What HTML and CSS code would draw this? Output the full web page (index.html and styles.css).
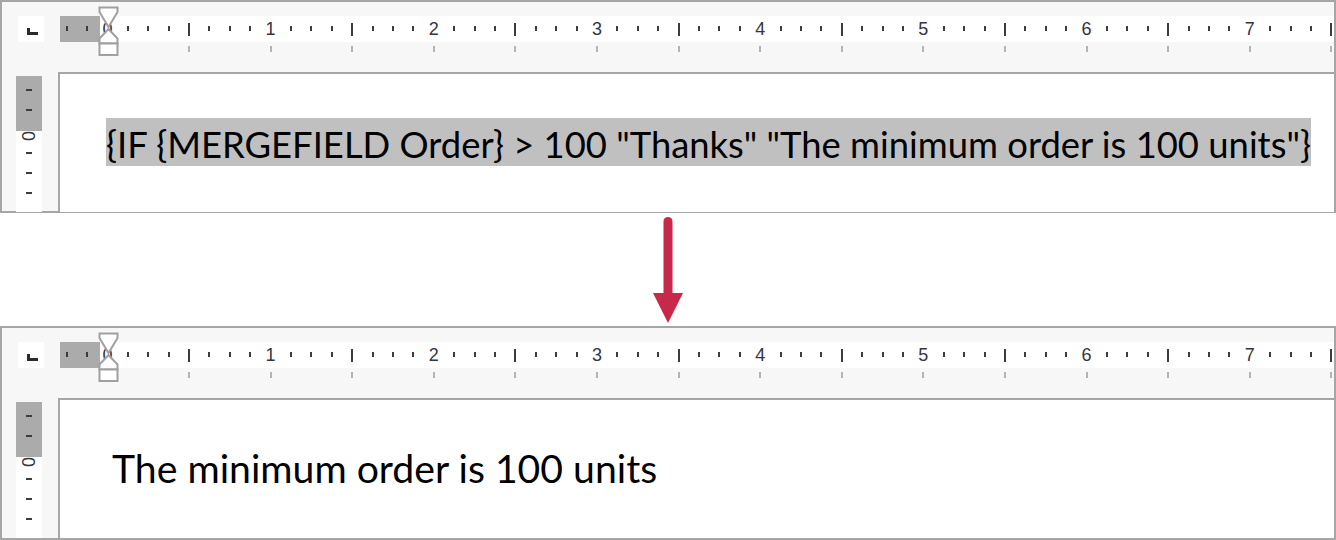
FILE: index.html
```html
<!DOCTYPE html>
<html lang="en">
<head>
    <meta charset="UTF-8">
    <title>IF field result</title>
    <link rel="stylesheet" href="styles.css">
</head>
<body>

<div class="panel">
    <div class="panel-top">
        <div class="tab-corner"><span class="tab-l"></span></div>
        <div class="ruler-col">
            <div class="hruler">
                <div class="ruler-nums">
                    <span><b>0</b></span><span><b>1</b></span><span><b>2</b></span><span><b>3</b></span>
                    <span><b>4</b></span><span><b>5</b></span><span><b>6</b></span><span><b>7</b></span>
                </div>
            </div>
            <div class="tabstops"></div>
            <svg class="indent-marker" width="21" height="50" viewBox="0 0 21 50">
                <path d="M1.5 1.5 H19.5 V6 L10.5 21 L1.5 6 Z"/>
                <path d="M10.5 23 L19.5 32.5 V37.5 H1.5 V32.5 Z"/>
                <rect x="1.5" y="37.5" width="18" height="11.5"/>
            </svg>
        </div>
    </div>
    <div class="panel-body">
        <div class="vruler">
            <i class="vtick"></i>
            <i class="vtick second"></i>
            <span class="vnum">0</span>
            <i class="vtick after-num"></i>
            <i class="vtick"></i>
            <i class="vtick"></i>
        </div>
        <div class="page page-code">
            <span class="field-code">{IF {MERGEFIELD Order} &gt; 100 "Thanks" "The minimum order is 100 units"}</span>
        </div>
    </div>
</div>

<div class="arrow-row">
    <svg width="32" height="113" viewBox="0 0 32 113">
        <line x1="16" y1="8.5" x2="16" y2="84" stroke="#c8294b" stroke-width="9" stroke-linecap="round"/>
        <polygon points="1,80 31,80 16,110" fill="#c8294b"/>
    </svg>
</div>

<div class="panel panel-bottom">
    <div class="panel-top">
        <div class="tab-corner"><span class="tab-l"></span></div>
        <div class="ruler-col">
            <div class="hruler">
                <div class="ruler-nums">
                    <span><b>0</b></span><span><b>1</b></span><span><b>2</b></span><span><b>3</b></span>
                    <span><b>4</b></span><span><b>5</b></span><span><b>6</b></span><span><b>7</b></span>
                </div>
            </div>
            <div class="tabstops"></div>
            <svg class="indent-marker" width="21" height="50" viewBox="0 0 21 50">
                <path d="M1.5 1.5 H19.5 V6 L10.5 21 L1.5 6 Z"/>
                <path d="M10.5 23 L19.5 32.5 V37.5 H1.5 V32.5 Z"/>
                <rect x="1.5" y="37.5" width="18" height="11.5"/>
            </svg>
        </div>
    </div>
    <div class="panel-body">
        <div class="vruler">
            <i class="vtick"></i>
            <i class="vtick second"></i>
            <span class="vnum">0</span>
            <i class="vtick after-num"></i>
            <i class="vtick"></i>
            <i class="vtick"></i>
        </div>
        <div class="page page-result">
            <span class="field-result">The minimum order is 100 units</span>
        </div>
    </div>
</div>

</body>
</html>
```

FILE: styles.css
```css
body {
    margin: 0;
    padding: 0;
    background: #fff;
    font-family: "Liberation Sans", Arial, sans-serif;
}

.panel {
    height: 213px;
    box-sizing: border-box;
    border: 2px solid #a6a6a6;
    background-color: #f7f7f7;
    display: flex;
    flex-direction: column;
}

.panel-bottom {
    height: 214px;
}

.panel-top {
    display: flex;
    padding: 14px 0 0 16px;
}

.tab-corner {
    width: 26px;
    height: 26px;
    background: #fff;
    margin-right: 16px;
    box-sizing: border-box;
    padding: 12px 0 0 9px;
}

.tab-l {
    display: block;
    width: 8px;
    height: 4px;
    border-left: 3px solid #2b2b2b;
    border-bottom: 3px solid #2b2b2b;
}

.ruler-col {
    flex: 1;
    position: relative;
}

/* ticks: half inch, eighth inch, then the grey left margin */
.hruler {
    height: 26px;
    overflow: hidden;
    background:
        repeating-linear-gradient(to right, transparent 0 128px, #3c3c3c 128px 130px, transparent 130px 163.2px) 0 7px / 100% 13px no-repeat,
        repeating-linear-gradient(to right, transparent 0 5.6px, #3c3c3c 5.6px 7.6px, transparent 7.6px 20.4px) 0 10px / 100% 5px no-repeat,
        linear-gradient(to right, #ababab 0 40px, #fff 40px);
}

.ruler-nums {
    display: flex;
    margin-left: -34.2px;
}

.ruler-nums span {
    flex: 0 0 163.2px;
    text-align: center;
    line-height: 26px;
    font-size: 18px;
    color: #35353f;
}

.ruler-nums b {
    font-weight: normal;
    background: #fff;
    padding: 0 2px;
}

.tabstops {
    height: 6px;
    margin-top: 4px;
    background: repeating-linear-gradient(to right, transparent 0 46.4px, #b4b4b4 46.4px 48.4px, transparent 48.4px 81.6px);
}

.indent-marker {
    position: absolute;
    left: 38px;
    top: -10px;
}

.indent-marker path,
.indent-marker rect {
    fill: #fff;
    stroke: #a0a0a0;
    stroke-width: 2;
}

.panel-body {
    flex: 1;
    display: flex;
    margin-top: 20px;
}

.vruler {
    width: 26px;
    margin: 4px 16px 0 14px;
    display: flex;
    flex-direction: column;
    align-items: center;
    padding-top: 13px;
    box-sizing: border-box;
    background: linear-gradient(#ababab 0 55px, #fff 55px);
}

.vtick {
    display: block;
    width: 6px;
    height: 2px;
    background: #3c3c3c;
    margin-bottom: 18px;
}

.vtick.second {
    margin-bottom: 20px;
}

.vnum {
    display: block;
    height: 10px;
    line-height: 10px;
    font-size: 18px;
    color: #35353f;
    transform: rotate(-90deg);
    margin-bottom: 11px;
}

.page {
    flex: 1;
    background: #fff;
    border-top: 2px solid #a6a6a6;
    border-left: 2px solid #a6a6a6;
    font-family: Lato, "Open Sans", sans-serif;
    color: #000;
    white-space: nowrap;
    overflow: hidden;
}

.page-code {
    padding: 44px 0 0 46px;
}

.field-code {
    display: inline-block;
    font-size: 36.4px;
    line-height: 44px;
    padding-top: 4px;
    background: #c0c0c0;
}

.page-result {
    padding: 44px 0 0 52px;
}

.field-result {
    display: inline-block;
    font-size: 39.2px;
    line-height: 48px;
}

.arrow-row {
    height: 113px;
    display: flex;
    justify-content: center;
}
```
